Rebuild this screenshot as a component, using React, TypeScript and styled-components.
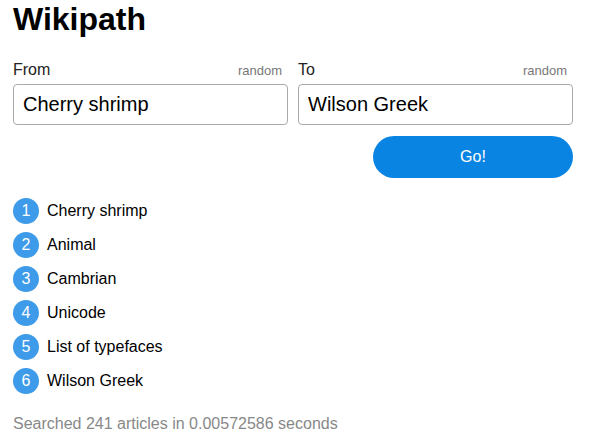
import React from "react";
import styled, { createGlobalStyle } from "styled-components";

const GlobalStyle = createGlobalStyle`
  body {
    margin: 0;
    background: #fff;
    font-family: "Liberation Sans", Arial, sans-serif;
    color: #000;
  }
`;

const steps = [
  "Cherry shrimp",
  "Animal",
  "Cambrian",
  "Unicode",
  "List of typefaces",
  "Wilson Greek",
];

const App = () => {
  return (
    <Page>
      <GlobalStyle />
      <Title>Wikipath</Title>
      <Fields>
        <Field>
          <LabelRow>
            <Label>From</Label>
            <RandomLink>random</RandomLink>
          </LabelRow>
          <Input defaultValue="Cherry shrimp" />
        </Field>
        <Field>
          <LabelRow>
            <Label>To</Label>
            <RandomLink>random</RandomLink>
          </LabelRow>
          <Input defaultValue="Wilson Greek" />
        </Field>
      </Fields>
      <Actions>
        <GoButton>Go!</GoButton>
      </Actions>
      <PathList>
        {steps.map((step, i) => (
          <PathItem key={step}>
            <StepNumber>{i + 1}</StepNumber>
            <StepName>{step}</StepName>
          </PathItem>
        ))}
      </PathList>
      <Stats>Searched 241 articles in 0.00572586 seconds</Stats>
    </Page>
  );
};

export default App;

const Page = styled.div`
  width: 560px;
  padding: 0 13px;
`;

const Title = styled.h1`
  font-size: 32px;
  font-weight: bold;
  margin: 1px 0 0;
  line-height: 37px;
`;

const Fields = styled.div`
  display: grid;
  grid-template-columns: 1fr 1fr;
  gap: 10px;
  margin-top: 23px;
`;

const Field = styled.div`
  display: flex;
  flex-direction: column;
`;

const LabelRow = styled.div`
  display: flex;
  justify-content: space-between;
  align-items: baseline;
  padding-right: 6px;
  margin-bottom: 5px;
`;

const Label = styled.label`
  font-size: 16px;
  color: #222;
`;

const RandomLink = styled.span`
  font-size: 13px;
  color: #777;
  cursor: pointer;
`;

const Input = styled.input`
  box-sizing: border-box;
  height: 41px;
  width: 100%;
  border: 1px solid #aaa;
  border-radius: 4px;
  padding: 0 9px;
  font-family: "Liberation Sans", Arial, sans-serif;
  font-size: 20px;
  color: #000;
  outline: none;
`;

const Actions = styled.div`
  display: flex;
  justify-content: flex-end;
  margin-top: 11px;
`;

const GoButton = styled.button`
  width: 200px;
  height: 42px;
  border: none;
  border-radius: 21px;
  background: #0a84e2;
  color: #fff;
  font-family: "Liberation Sans", Arial, sans-serif;
  font-size: 16px;
  cursor: pointer;
`;

const PathList = styled.ol`
  list-style: none;
  margin: 20px 0 0;
  padding: 0;
  display: flex;
  flex-direction: column;
  gap: 8px;
`;

const PathItem = styled.li`
  display: flex;
  align-items: center;
  gap: 8px;
`;

const StepNumber = styled.span`
  width: 26px;
  height: 26px;
  border-radius: 50%;
  background: #3d9be9;
  color: #fff;
  font-size: 16px;
  display: flex;
  align-items: center;
  justify-content: center;
`;

const StepName = styled.span`
  font-size: 16px;
`;

const Stats = styled.p`
  margin: 21px 0 0;
  font-size: 16px;
  color: #888;
`;
